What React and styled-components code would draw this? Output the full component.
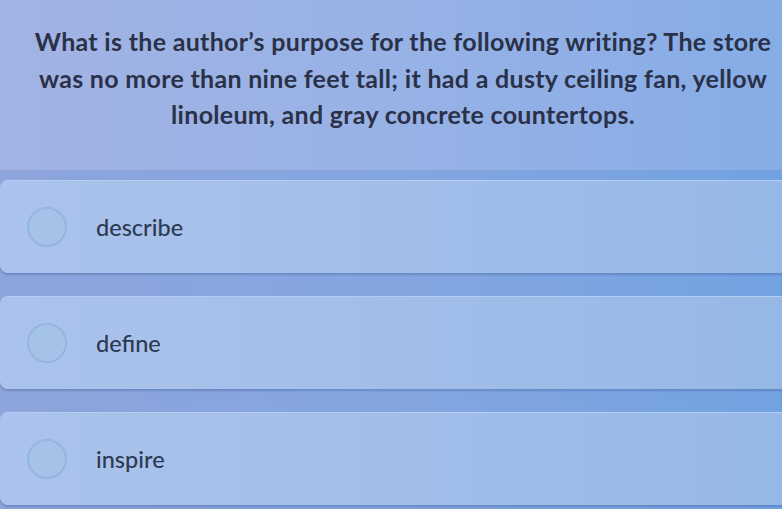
import React from 'react';
import styled, {createGlobalStyle} from 'styled-components';

const GlobalStyle = createGlobalStyle`
  html, body {
    margin: 0;
    padding: 0;
    height: 100%;
    overflow: hidden;
  }
  body {
    font-family: Lato, "Open Sans", sans-serif;
    background: linear-gradient(90deg, #a2b3e3 0%, #98b2e6 50%, #86ace6 100%);
  }
`

const Page = styled.main`
  width: 782px;
  height: 509px;
  display: flex;
  flex-direction: column;
`

const Prompt = styled.section`
  height: 170px;
  box-sizing: border-box;
  padding: 23px 6px 0 30px;
  display: flex;
  justify-content: center;
`

const PromptText = styled.h1`
  margin: 0;
  text-align: center;
  font-size: 25px;
  font-weight: 700;
  line-height: 36.5px;
  letter-spacing: 0.3px;
  color: #2a3148;
`

const Choices = styled.ul`
  list-style: none;
  margin: 0;
  padding: 10px 0 0;
  flex: 1;
  display: flex;
  flex-direction: column;
  gap: 23px;
  background: linear-gradient(90deg, #8ea4dc 0%, #84a6e0 50%, #73a2e2 100%);
`

const Choice = styled.li`
  width: calc(100% + 24px);
  height: 93px;
  box-sizing: border-box;
  padding-left: 27px;
  display: flex;
  align-items: center;
  gap: 29px;
  border-radius: 8px;
  background: linear-gradient(90deg, #abc3ec 0%, #a1bee9 50%, #96b8e6 100%);
  border-top: 1px solid #b6ccf0;
  box-shadow: 0 2px 2px rgba(60, 90, 150, 0.35);
  cursor: pointer;
`

const Radio = styled.span`
  width: 40px;
  height: 40px;
  flex: none;
  box-sizing: border-box;
  border-radius: 50%;
  background: #a5c3e8;
  border: 2px solid #96b5de;
`

const Label = styled.span`
  font-size: 23.5px;
  font-weight: 500;
  color: #2c3a52;
`

const options = ['describe', 'define', 'inspire'];

export default function App() {
  return (
    <Page>
      <GlobalStyle />
      <Prompt>
        <PromptText>
          What is the author’s purpose for the following writing? The store was no more than nine feet tall; it had a dusty ceiling fan, yellow linoleum, and gray concrete countertops.
        </PromptText>
      </Prompt>
      <Choices>
        {options.map(option => (
          <Choice key={option}>
            <Radio />
            <Label>{option}</Label>
          </Choice>
        ))}
      </Choices>
    </Page>
  );
}
